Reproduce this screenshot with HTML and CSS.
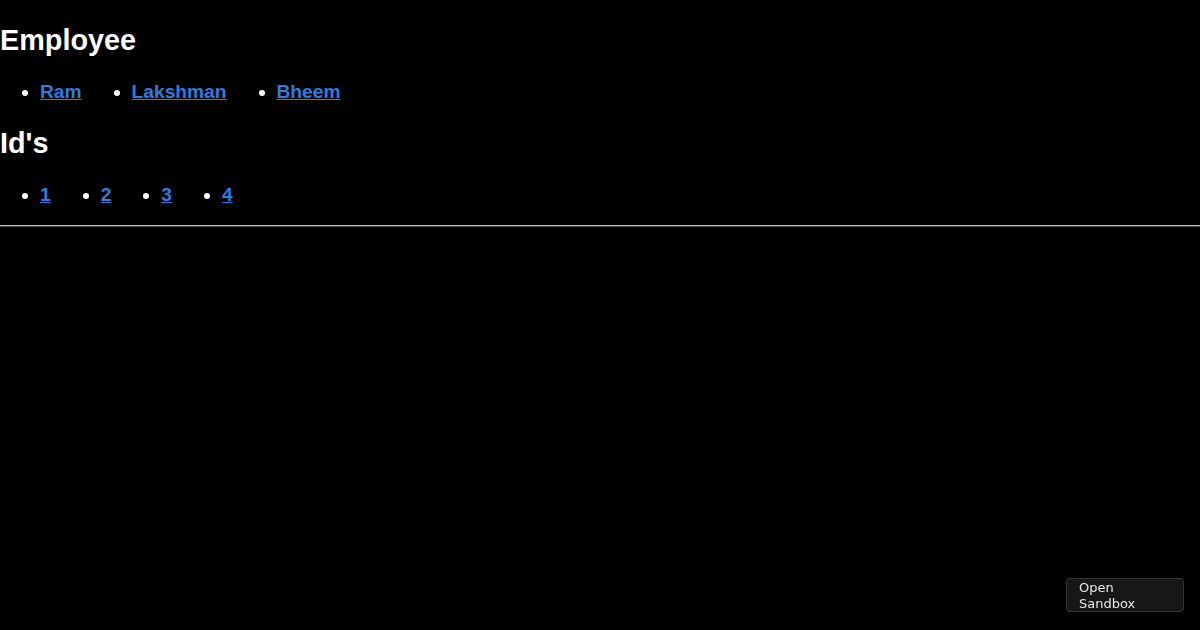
FILE: index.html
```html
<!DOCTYPE html>
<html>
<head>
<meta charset="utf-8">
<link rel="stylesheet" href="styles.css">
</head>
<body>
<h2 class="title">Employee</h2>
<ul class="row">
  <li><a href="#">Ram</a></li>
  <li><a href="#">Lakshman</a></li>
  <li><a href="#">Bheem</a></li>
</ul>
<h2 class="title">Id's</h2>
<ul class="row">
  <li><a href="#">1</a></li>
  <li><a href="#">2</a></li>
  <li><a href="#">3</a></li>
  <li><a href="#">4</a></li>
</ul>
<hr class="rule">
<a class="sandbox" href="#">Open Sandbox</a>
</body>
</html>
```
FILE: styles.css
```css
html, body {
  background: #000;
}
body {
  margin: 0;
  color: #fff;
  font-family: "Liberation Sans", Arial, sans-serif;
  font-size: 19.2px;
}
.title {
  font-size: 1.5em;
  font-weight: bold;
  margin: 0.83em 0;
}
.row {
  display: flex;
  margin: 1em 0;
  padding-left: 40px;
  font-weight: bold;
}
.row li {
  margin-right: 50px;
}
.row a {
  color: #2d7de1;
}
.rule {
  margin: 0.5em 0 0;
  border: none;
  border-top: 1px solid #bbb;
  border-bottom: 1px solid #444;
  height: 0;
}
.sandbox {
  position: fixed;
  right: 16px;
  bottom: 18px;
  display: block;
  width: 80px;
  height: 31px;
  padding: 1px 24px 0 12px;
  background: #151718;
  border: 1px solid #333638;
  border-radius: 4px;
  color: #e8e8e8;
  text-decoration: none;
  font-family: "DejaVu Sans", sans-serif;
  font-size: 13px;
  line-height: 16px;
}
```
